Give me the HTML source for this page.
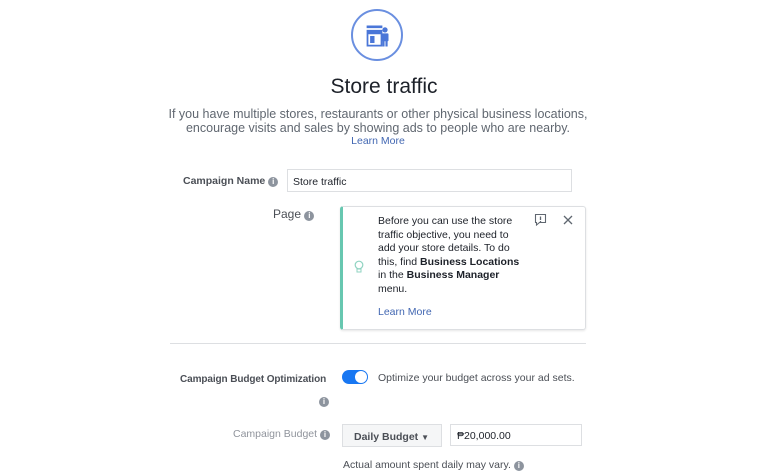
<!DOCTYPE html>
<html><head><meta charset="utf-8"><style>
*{margin:0;padding:0;box-sizing:border-box}
body{width:768px;height:474px;background:#fff;font-family:"Liberation Sans",Arial,sans-serif;position:relative;overflow:hidden;color:#4b4f56}
.a{position:absolute;white-space:nowrap}
.i{display:inline-block;width:10px;height:10px;border-radius:50%;background:#8d949e;color:#fff;font-size:8px;line-height:10px;text-align:center;font-weight:bold;vertical-align:0px}
</style></head><body>
<div class="a" style="left:351px;top:9px;width:52px;height:52px;border:2px solid #6a8fe0;border-radius:50%"></div>
<svg class="a" style="left:364px;top:22px" width="28" height="28" viewBox="0 0 32 32">
<rect x="3" y="4" width="18" height="3" fill="#4a76d8"/>
<rect x="3" y="9" width="18" height="3" fill="#4a76d8"/>
<rect x="4" y="13" width="16" height="14" fill="none" stroke="#4a76d8" stroke-width="2"/>
<rect x="7" y="16" width="5" height="8" fill="#4a76d8"/>
<circle cx="24" cy="9" r="3" fill="#4a76d8"/>
<rect x="20" y="13" width="8" height="9" rx="1" fill="#4a76d8"/>
<rect x="21" y="20" width="2.5" height="8" fill="#4a76d8"/>
<rect x="24.5" y="20" width="2.5" height="8" fill="#4a76d8"/>
</svg>
<div class="a" style="left:0;width:768px;top:75px;text-align:center;font-size:21px;color:#1d2129">Store traffic</div>
<div class="a" style="left:0;width:756px;top:107px;text-align:center;font-size:12.5px;line-height:14px;color:#606770">If you have multiple stores, restaurants or other physical business locations,<br>encourage visits and sales by showing ads to people who are nearby.</div>
<div class="a" style="left:0;width:756px;top:135px;text-align:center;font-size:10.5px;color:#4267b2">Learn More</div>

<div class="a" style="left:183px;top:175px;font-size:10.5px;font-weight:bold;color:#4b4f56">Campaign Name <span class="i">i</span></div>
<div class="a" style="left:287px;top:169px;width:285px;height:23px;border:1px solid #dddfe2;font-size:10.5px;padding:6px 5px;color:#1d2129">Store traffic</div>

<div class="a" style="left:273px;top:207px;font-size:12px;color:#4b4f56">Page <span class="i">i</span></div>
<div class="a" style="left:340px;top:206px;width:246px;height:124px;border:1px solid #dddfe2;border-left:3px solid #67c7b0;border-radius:3px;box-shadow:0 1px 2px rgba(0,0,0,.1)"></div>
<div class="a" style="left:378px;top:215px;width:150px;font-size:10.5px;line-height:13.5px;color:#1d2129;white-space:normal">Before you can use the store traffic objective, you need to add your store details. To do this, find <b>Business Locations</b> in the <b>Business Manager</b> menu.</div>
<div class="a" style="left:378px;top:306px;font-size:10.5px;color:#4267b2">Learn More</div>
<svg class="a" style="left:354px;top:260px" width="10" height="14" viewBox="0 0 10 14"><circle cx="5" cy="5" r="3.8" fill="none" stroke="#8fd3c1" stroke-width="1.2"/><rect x="3" y="9" width="4" height="3" fill="none" stroke="#8fd3c1"/></svg>
<svg class="a" style="left:534px;top:213px" width="13" height="13" viewBox="0 0 13 13"><path d="M1.5 1.5h10v8h-6l-3 2.5v-2.5h-1z" fill="none" stroke="#606770" stroke-width="1.1"/><path d="M6.5 3.5v3.5M6.5 8v1" stroke="#606770" stroke-width="1.3"/></svg>
<svg class="a" style="left:563px;top:215px" width="10" height="10" viewBox="0 0 10 10"><path d="M1 1L9 9M9 1L1 9" stroke="#606770" stroke-width="1.3"/></svg>

<div class="a" style="left:170px;top:343px;width:416px;height:1px;background:#dddfe2"></div>

<div class="a" style="left:180px;top:374px;font-size:10px;font-weight:bold;color:#4b4f56;letter-spacing:-0.1px">Campaign Budget Optimization</div>
<div class="a" style="left:319px;top:391px"><span class="i">i</span></div>
<div class="a" style="left:342px;top:370px;width:26px;height:14px;border-radius:7px;background:#1877f2"></div>
<div class="a" style="left:355px;top:371px;width:12px;height:12px;border-radius:50%;background:#fff"></div>
<div class="a" style="left:378px;top:372px;font-size:10.5px;color:#4b4f56">Optimize your budget across your ad sets.</div>

<div class="a" style="left:233px;top:428px;font-size:10.5px;color:#90949c">Campaign Budget <span class="i">i</span></div>
<div class="a" style="left:342px;top:424px;width:100px;height:23px;background:#f5f6f7;border:1px solid #dddfe2;font-size:10.5px;font-weight:bold;color:#4b4f56;padding:6px 11px">Daily Budget <span style="font-size:8px">▼</span></div>
<div class="a" style="left:450px;top:424px;width:132px;height:22px;border:1px solid #dddfe2;font-size:10.5px;color:#1d2129;padding:5px 6px">₱20,000.00</div>
<div class="a" style="left:343px;top:459px;font-size:10.5px;color:#4b4f56">Actual amount spent daily may vary. <span class="i">i</span></div>
</body></html>
